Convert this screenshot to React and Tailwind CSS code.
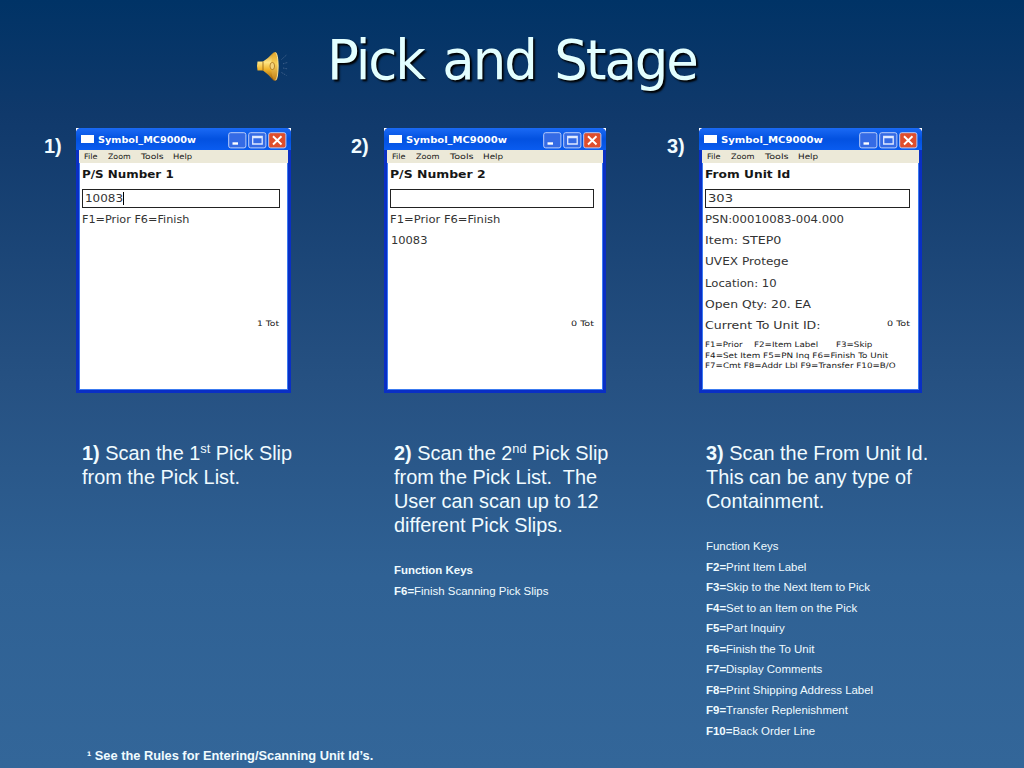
import React, { useLayoutEffect, useRef, useState } from 'react';

// Text stretched horizontally to a given width
const Fit = ({ w, className = '', children }) => {
  const ref = useRef(null);
  const [scale, setScale] = useState(1);

  useLayoutEffect(() => {
    const measure = () => {
      if (ref.current?.offsetWidth) {
        setScale(w / ref.current.offsetWidth);
      }
    };
    measure();
    document.fonts?.ready.then(measure);
  }, [w]);

  return (
    <span className={`block shrink-0 whitespace-pre ${className}`} style={{ width: w }}>
      <span ref={ref} className="inline-block origin-left" style={{ transform: `scaleX(${scale})` }}>
        {children}
      </span>
    </span>
  );
};

const screens = [
  {
    label: '1)',
    windowClass: 'w-[215px]',
    titleWidth: 98,
    menu: [14, 23, 22, 19],
    heading: ['P/S Number 1', 92],
    inputClass: 'w-[198px]',
    input: ['10083', 38],
    cursor: true,
    lines: [['F1=Prior F6=Finish', 107]],
    total: ['1 Tot', 22],
    keys: [],
  },
  {
    label: '2)',
    windowClass: 'w-[222px]',
    titleWidth: 101,
    menu: [14, 24, 23, 20],
    heading: ['P/S Number 2', 96],
    inputClass: 'w-[204px]',
    lines: [['F1=Prior F6=Finish', 110], ['10083', 36, 'ml-px']],
    total: ['0 Tot', 23],
    keys: [],
  },
  {
    label: '3)',
    windowClass: 'w-[223px]',
    titleWidth: 102,
    menu: [14, 24, 23, 20],
    heading: ['From Unit Id', 85],
    inputClass: 'w-[205px]',
    input: ['303', 25],
    lines: [
      ['PSN:00010083-004.000', 139],
      ['Item: STEP0', 77],
      ['UVEX Protege', 83],
      ['Location: 10', 72],
      ['Open Qty: 20. EA', 106],
      ['Current To Unit ID:', 116],
    ],
    total: ['0 Tot', 23],
    keys: [
      [['F1=Prior', 38], ['F2=Item Label', 64], ['F3=Skip', 36]],
      [['F4=Set Item F5=PN Inq F6=Finish To Unit', 183]],
      [['F7=Cmt F8=Addr Lbl F9=Transfer F10=B/O', 191]],
    ],
  },
];

const functionKeys = [
  ['F2', 'Print Item Label'],
  ['F3', 'Skip to the Next Item to Pick'],
  ['F4', 'Set to an Item on the Pick'],
  ['F5', 'Part Inquiry'],
  ['F6', 'Finish the To Unit'],
  ['F7', 'Display Comments'],
  ['F8', 'Print Shipping Address Label'],
  ['F9', 'Transfer Replenishment'],
  ['F10', 'Back Order Line'],
];

const Speaker = () => (
  <svg width="34" height="32" viewBox="0 0 34 32" className="shrink-0">
    <defs>
      <linearGradient id="cone" x1="0" y1="0" x2="0" y2="1">
        <stop offset="0" stopColor="#c98f1d" />
        <stop offset="0.35" stopColor="#ffe583" />
        <stop offset="0.6" stopColor="#f1b52c" />
        <stop offset="1" stopColor="#93590c" />
      </linearGradient>
      <linearGradient id="rim" x1="0" y1="0" x2="0" y2="1">
        <stop offset="0" stopColor="#e0a52c" />
        <stop offset="0.4" stopColor="#f8cf58" />
        <stop offset="1" stopColor="#c07f18" />
      </linearGradient>
    </defs>
    <path d="M2.500 11.500H8Q13 8.500 18.500 2.500H21.500V30.500H18.500Q13 24 8 20.500H2.500Q1.500 16 2.500 11.500Z" fill="url(#cone)" />
    <path d="M19.500 2.200Q23 2 23.300 16Q23 31 19.500 30.500Q16.500 28 16 16Q16.500 5 19.500 2.200Z" fill="url(#rim)" />
    <path d="M20.500 2.500Q23 4 23.100 16Q23 29 20.500 30.300" fill="none" stroke="#ffeaa0" strokeWidth="0.900" />
    <ellipse cx="17.300" cy="16" rx="2.300" ry="3.600" fill="#f3d27a" stroke="#a87420" strokeWidth="0.800" />
    <path d="M8 11.500V20.500" stroke="#8c5a12" strokeWidth="0.800" />
    <path d="M26.500 9.500l5-4.500M28 13.800l5-1.500M28 18l5 1M26.500 22.500l5 3" stroke="#7d91b2" strokeWidth="0.700" strokeDasharray="1.500 1" opacity="0.65" />
  </svg>
);

const WindowButton = ({ kind }) => (
  <svg width="19" height="17" viewBox="0 0 19 17">
    <rect x="0.700" y="0.700" width="17.200" height="15.200" rx="2" fill={kind === 'close' ? '#df4e2c' : '#356be5'} stroke="#b9cdfa" strokeWidth="1" />
    {kind === 'min' && <path d="M4.500 11.500h5.500" stroke="#fff" strokeWidth="2.400" />}
    {kind === 'max' && <path d="M4.700 4.500h9.500v7.500H4.700zM4.700 5.500h9.500" fill="none" stroke="#dfe9ff" strokeWidth="1.300" />}
    {kind === 'close' && <path d="M5 4.200l8.500 8.300M13.500 4.200L5 12.500" stroke="#fff" strokeWidth="1.900" />}
  </svg>
);

const DeviceWindow = ({ screen }) => (
  <div className={`self-start bg-white shrink-0 ${screen.windowClass}`}>
    <div className="relative h-[265px] rounded-t-[5px] bg-[#0a2fc4] px-[3px] pb-[3px] flex flex-col font-['DejaVu_Sans','Noto_Sans',sans-serif] text-[#161616]">
      <div className="-mx-[3px] h-[22px] shrink-0 rounded-t-[5px] bg-linear-to-b from-[#1a6af5] via-[#0351e0] to-[#0a5cf0] pl-[5px] pr-[4px] flex items-center">
        <div className="w-[13px] h-[8px] bg-white mr-[4px] shrink-0"></div>
        <Fit w={screen.titleWidth} className="font-['DejaVu_Sans',sans-serif] font-bold text-[9.5px] leading-[20px] text-white pt-[2px]">
          Symbol_MC9000w
        </Fit>
        <div className="ml-auto flex gap-[1px] pt-[2px]">
          <WindowButton kind="min" />
          <WindowButton kind="max" />
          <WindowButton kind="close" />
        </div>
      </div>
      <div className="h-[13px] shrink-0 bg-[#ece9d8] pl-[5px] flex gap-[10px] text-[7.500px] leading-[13px]">
        {['File', 'Zoom', 'Tools', 'Help'].map((item, i) => (
          <Fit key={item} w={screen.menu[i]}>{item}</Fit>
        ))}
      </div>
      <div className="flex-1 bg-white border-x border-b border-[#3c7bf0] pl-[2px] overflow-hidden">
        <Fit w={screen.heading[1]} className="h-[26px] text-[10.500px] leading-[23px] font-bold">
          {screen.heading[0]}
        </Fit>
        <div className={`h-[19px] border border-[#222] pl-[2px] flex items-center ${screen.inputClass}`}>
          {screen.input && (
            <Fit w={screen.input[1]} className="text-[11px] leading-[17px] text-[#333]">{screen.input[0]}</Fit>
          )}
          {screen.cursor && <div className="w-px h-[13px] bg-black"></div>}
        </div>
        <div className="pt-[1px] text-[10.500px] leading-[21.2px] text-[#333]">
          {screen.lines.map(([text, w, indent = '']) => (
            <Fit key={text} w={w} className={`h-[21.2px] ${indent}`}>{text}</Fit>
          ))}
        </div>
        <div className="mt-[4px] text-[7.500px] leading-[10.500px]">
          {screen.keys.map((row, i) => (
            <div key={i} className="flex gap-[11px] h-[10.500px]">
              {row.map(([text, w], j) => (
                <Fit key={text} w={w} className={j === 2 ? 'ml-[7px]' : ''}>{text}</Fit>
              ))}
            </div>
          ))}
        </div>
      </div>
      <div className="absolute top-[190px] right-[12px] text-[7.500px] leading-[12px]">
        <Fit w={screen.total[1]}>{screen.total[0]}</Fit>
      </div>
    </div>
  </div>
);

const Key = ({ name, children }) => (
  <p><b>{name}=</b>{children}</p>
);

const App = () => {
  return (
    <div className="w-[1024px] h-[768px] overflow-hidden bg-[linear-gradient(to_bottom,#003366_0%,#10396b_15%,#265182_50%,#2f6194_75%,#336699_100%)] font-['Liberation_Sans',Arial,sans-serif] text-[#f0fbff] flex flex-col">
      <header className="h-[128px] shrink-0 flex items-start pl-[255px]">
        <div className="pt-[50px] w-[72px]">
          <Speaker />
        </div>
        <h1 className="pt-[20px] text-[#e3ffff] [text-shadow:2px_2px_2px_#000]">
          <Fit w={370} className="font-['DejaVu_Sans',sans-serif] tracking-[-0.04em] [word-spacing:4px] text-[56px] leading-[80px]">
            Pick and Stage
          </Fit>
        </h1>
      </header>

      <section className="h-[313px] shrink-0 flex pl-[44px]">
        {screens.map((screen, i) => (
          <div key={screen.label} className={`flex ${i === 0 ? 'w-[307px]' : i === 1 ? 'w-[316px]' : ''}`}>
            <div className={`pt-[6px] text-[20px] leading-[24px] font-bold ${i === 1 ? 'w-[33px]' : 'w-[32px]'}`}>{screen.label}</div>
            <DeviceWindow screen={screen} />
          </div>
        ))}
      </section>

      <section className="h-[305px] shrink-0 flex pl-[82px] text-[19.9px] leading-[24px] whitespace-pre">
        <div className="w-[312px]">
          <p><b>1)</b> Scan the 1<sup className="text-[12.8px] leading-none -top-[7px]">st</sup> Pick Slip</p>
          <p>from the Pick List.</p>
        </div>
        <div className="w-[312px]">
          <p><b>2)</b> Scan the 2<sup className="text-[12.8px] leading-none -top-[7px]">nd</sup> Pick Slip</p>
          <p>from the Pick List.  The</p>
          <p>User can scan up to 12</p>
          <p>different Pick Slips.</p>
          <div className="mt-[23.3px] text-[11.46px] leading-[20.5px]">
            <p className="font-bold">Function Keys</p>
            <Key name="F6">Finish Scanning Pick Slips</Key>
          </div>
        </div>
        <div>
          <p><b>3)</b> Scan the From Unit Id.</p>
          <p>This can be any type of</p>
          <p>Containment.</p>
          <div className="mt-[23.3px] text-[11.46px] leading-[20.5px]">
            <p>Function Keys</p>
            {functionKeys.map(([name, text]) => (
              <Key key={name} name={name}>{text}</Key>
            ))}
          </div>
        </div>
      </section>

      <footer className="pl-[87px] text-[12px] leading-[20px] font-bold">
        <Fit w={286}>¹ See the Rules for Entering/Scanning Unit Id’s.</Fit>
      </footer>
    </div>
  );
};

export default App;
